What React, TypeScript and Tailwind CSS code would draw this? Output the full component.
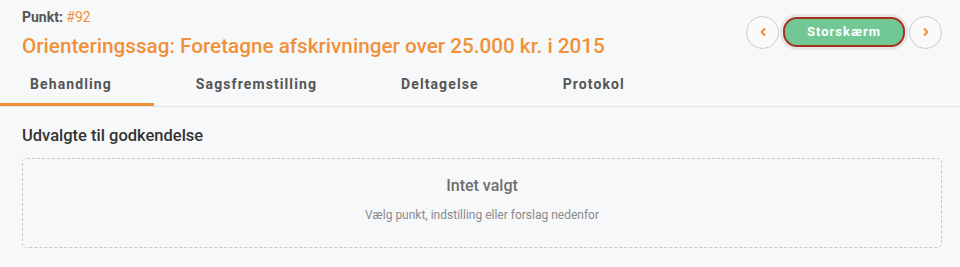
import React from "react";

function Chevron({ dir }: { dir: "left" | "right" }) {
  return (
    <svg width="8" height="10" viewBox="0 0 8 10" fill="none">
      {dir === "left" ? (
        <path d="M5.5 2 L2.5 5 L5.5 8" stroke="#f0913a" strokeWidth="2" strokeLinecap="round" strokeLinejoin="round" />
      ) : (
        <path d="M2.5 2 L5.5 5 L2.5 8" stroke="#f0913a" strokeWidth="2" strokeLinecap="round" strokeLinejoin="round" />
      )}
    </svg>
  );
}

export default function App() {
  const tabs = ["Behandling", "Sagsfremstilling", "Deltagelse", "Protokol"];
  return (
    <div className="min-h-[267px] bg-[#f7f8fa] font-['Roboto','Liberation_Sans',sans-serif] overflow-hidden">
      <div className="flex justify-between pl-[22px] pr-[18px] pt-[9px]">
        <div>
          <div className="text-[14px] leading-[16px]">
            <span className="font-bold text-[#555555]">Punkt:</span>{" "}
            <span className="text-[#f0913a]">#92</span>
          </div>
          <div className="mt-[9px] text-[20.7px] leading-[24px] font-medium text-[#f0913a]">
            Orienteringssag: Foretagne afskrivninger over 25.000 kr. i 2015
          </div>
        </div>
        <div className="flex items-center gap-[4px] mt-[6px] h-[34px]">
          <button className="w-[33px] h-[33px] rounded-full border border-[#cccccc] bg-[#fafafa] flex items-center justify-center">
            <Chevron dir="left" />
          </button>
          <button className="h-[30px] w-[122px] rounded-[14px] border-2 border-[#a8321f] bg-[#72c894] text-white text-[13px] font-bold tracking-[1px] shadow-[0_0_0_3px_rgba(0,0,0,0.07)] flex items-center justify-center">
            Storskærm
          </button>
          <button className="w-[33px] h-[33px] rounded-full border border-[#cccccc] bg-[#fafafa] flex items-center justify-center">
            <Chevron dir="right" />
          </button>
        </div>
      </div>

      <div className="border-b border-[#e3e4e6]">
        <div className="flex ml-[-12px]">
          {tabs.map((t, i) => (
            <div
              key={t}
              className={
                i === 0
                  ? "px-[42px] pt-[16px] pb-[9px] border-b-[3px] border-[#f0913a] text-[14px] leading-[20px] font-bold tracking-[1.1px] text-[#555555]"
                  : "px-[42px] pt-[16px] pb-[9px] border-b-[3px] border-transparent text-[14px] leading-[20px] font-bold tracking-[1.1px] text-[#555555]"
              }
            >
              {t}
            </div>
          ))}
        </div>
      </div>

      <div className="px-[18px] pl-[22px]">
        <div className="mt-[19px] text-[16.5px] leading-[20px] font-medium text-[#333333]">
          Udvalgte til godkendelse
        </div>
        <div className="mt-[12px] h-[90px] rounded-[5px] border border-dashed border-[#c8c8c8] flex flex-col items-center pt-[17px]">
          <div className="text-[16px] leading-[20px] font-medium text-[#6e6e6e]">Intet valgt</div>
          <div className="mt-[11px] text-[12px] leading-[16px] text-[#8a8a8a]">
            Vælg punkt, indstilling eller forslag nedenfor
          </div>
        </div>
      </div>
    </div>
  );
}
